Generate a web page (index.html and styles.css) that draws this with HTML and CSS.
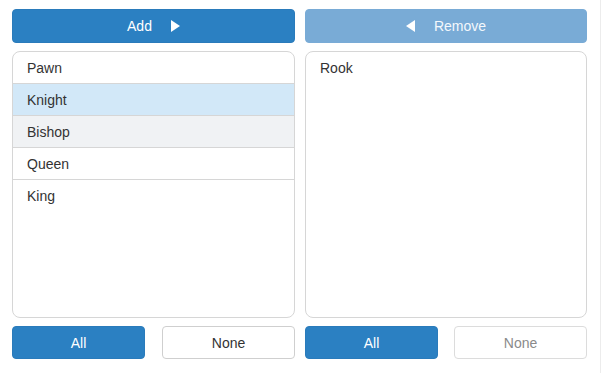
FILE: index.html
```html
<!DOCTYPE html>
<html lang="en">
<head>
    <meta charset="UTF-8">
    <title>Pick list</title>
    <link rel="stylesheet" href="styles.css">
</head>
<body>

<div class="page">
    <div class="picker">
        <button class="btn btn-primary move">
            <span>Add</span>
            <svg class="arrow" width="9" height="12" viewBox="0 0 9 12"><path d="M0 0 L9 6 L0 12 Z" fill="#fff"/></svg>
        </button>
        <button class="btn btn-primary move disabled">
            <svg class="arrow" width="9" height="12" viewBox="0 0 9 12"><path d="M9 0 L0 6 L9 12 Z" fill="#fff"/></svg>
            <span>Remove</span>
        </button>

        <ul class="list">
            <li>Pawn</li>
            <li class="selected">Knight</li>
            <li class="hover">Bishop</li>
            <li>Queen</li>
            <li>King</li>
        </ul>
        <ul class="list">
            <li class="plain">Rook</li>
        </ul>

        <div class="actions">
            <button class="btn btn-primary">All</button>
            <button class="btn btn-default">None</button>
        </div>
        <div class="actions">
            <button class="btn btn-primary">All</button>
            <button class="btn btn-default disabled">None</button>
        </div>
    </div>
</div>

</body>
</html>
```

FILE: styles.css
```css
body {
    margin: 0;
    padding: 0;
    background-color: #fff;
    font-family: "Liberation Sans", Arial, sans-serif;
    font-size: 14px;
    color: #333;
}
.page {
    width: 601px;
    height: 373px;
    border-right: 1px solid #ececec;
    box-sizing: border-box;
}
.picker {
    display: grid;
    grid-template-columns: 283px 282px;
    grid-template-rows: 34px 267px 33px;
    column-gap: 10px;
    row-gap: 8px;
    padding: 9px 0 0 12px;
}
.btn {
    font-family: inherit;
    font-size: 14px;
    border-radius: 4px;
    cursor: pointer;
    padding: 0;
    display: flex;
    align-items: center;
    justify-content: center;
}
.btn-primary {
    background-color: #2b80c2;
    border: 1px solid #2a7bbb;
    color: #fff;
}
.btn-primary.disabled {
    background-color: #79abd6;
    border-color: #79abd6;
    color: #f4f8fc;
}
.btn-default {
    background-color: #fff;
    border: 1px solid #cfcfcf;
    color: #333;
}
.btn-default.disabled {
    border-color: #dcdcdc;
    color: #8a8a8a;
}
.move {
    gap: 19px;
}
.move .arrow {
    display: block;
}
.list {
    list-style: none;
    margin: 0;
    padding: 0;
    border: 1px solid #d6d6d6;
    border-radius: 8px;
    overflow: hidden;
}
.list li {
    height: 31px;
    line-height: 32px;
    padding-left: 14px;
    border-bottom: 1px solid #d6d6d6;
}
.list li:last-child,
.list li.plain {
    border-bottom: none;
}
.list li.selected {
    background-color: #d2e8f8;
}
.list li.hover {
    background-color: #f0f2f4;
}
.actions {
    display: flex;
    justify-content: space-between;
}
.actions .btn {
    width: 133px;
}
```
